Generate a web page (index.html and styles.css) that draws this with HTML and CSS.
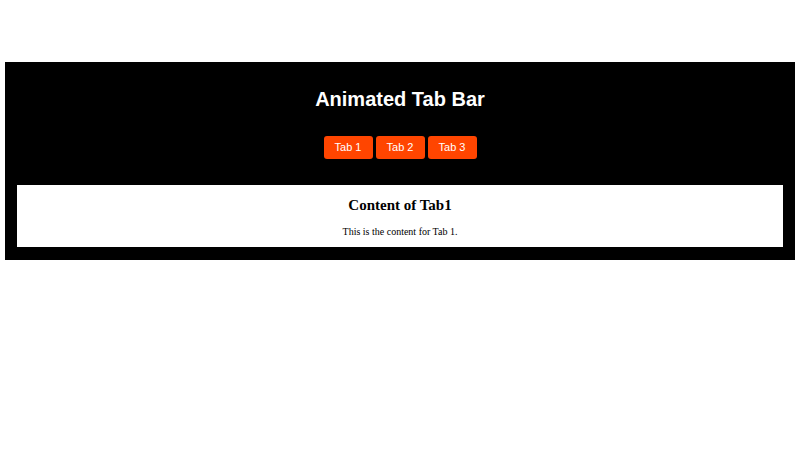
FILE: index.html
```html
<!DOCTYPE html>
<html>
<head>
    <title>Animated Tab Bar</title>
    <link rel="stylesheet" href="styles.css">
</head>
<body>
    <div class="tab-app">
        <h1>Animated Tab Bar</h1>
        <div class="tabs">
            <button class="tab active">Tab 1</button>
            <button class="tab">Tab 2</button>
            <button class="tab">Tab 3</button>
        </div>
        <div class="tab-content">
            <h2>Content of Tab1</h2>
            <p>This is the content for Tab 1.</p>
        </div>
    </div>
</body>
</html>
```

FILE: styles.css
```css
body {
    margin: 0;
    background: #fff;
}
.tab-app {
    margin: 62px 5px 0;
    padding: 26px 12px 13px;
    background: #000;
    text-align: center;
}
h1 {
    font-family: "Liberation Sans", Arial, sans-serif;
    font-size: 20px;
    line-height: 23px;
    color: #fff;
    margin: 0 0 25px;
}
.tabs {
    display: flex;
    justify-content: center;
    gap: 3px;
    margin-bottom: 26px;
}
.tab {
    font-family: "Liberation Sans", Arial, sans-serif;
    font-size: 11px;
    line-height: 13px;
    color: #fff;
    background: #ff4500;
    border: none;
    border-radius: 3px;
    padding: 5px 0;
    width: 49px;
    cursor: pointer;
}
.tab-content {
    background: #fff;
    padding: 11px 10px 9px;
    font-family: "Liberation Serif", "Times New Roman", serif;
    color: #000;
}
.tab-content h2 {
    font-size: 15px;
    line-height: 18px;
    margin: 0 0 12px;
}
.tab-content p {
    font-size: 10px;
    line-height: 12px;
    margin: 0;
}
```
